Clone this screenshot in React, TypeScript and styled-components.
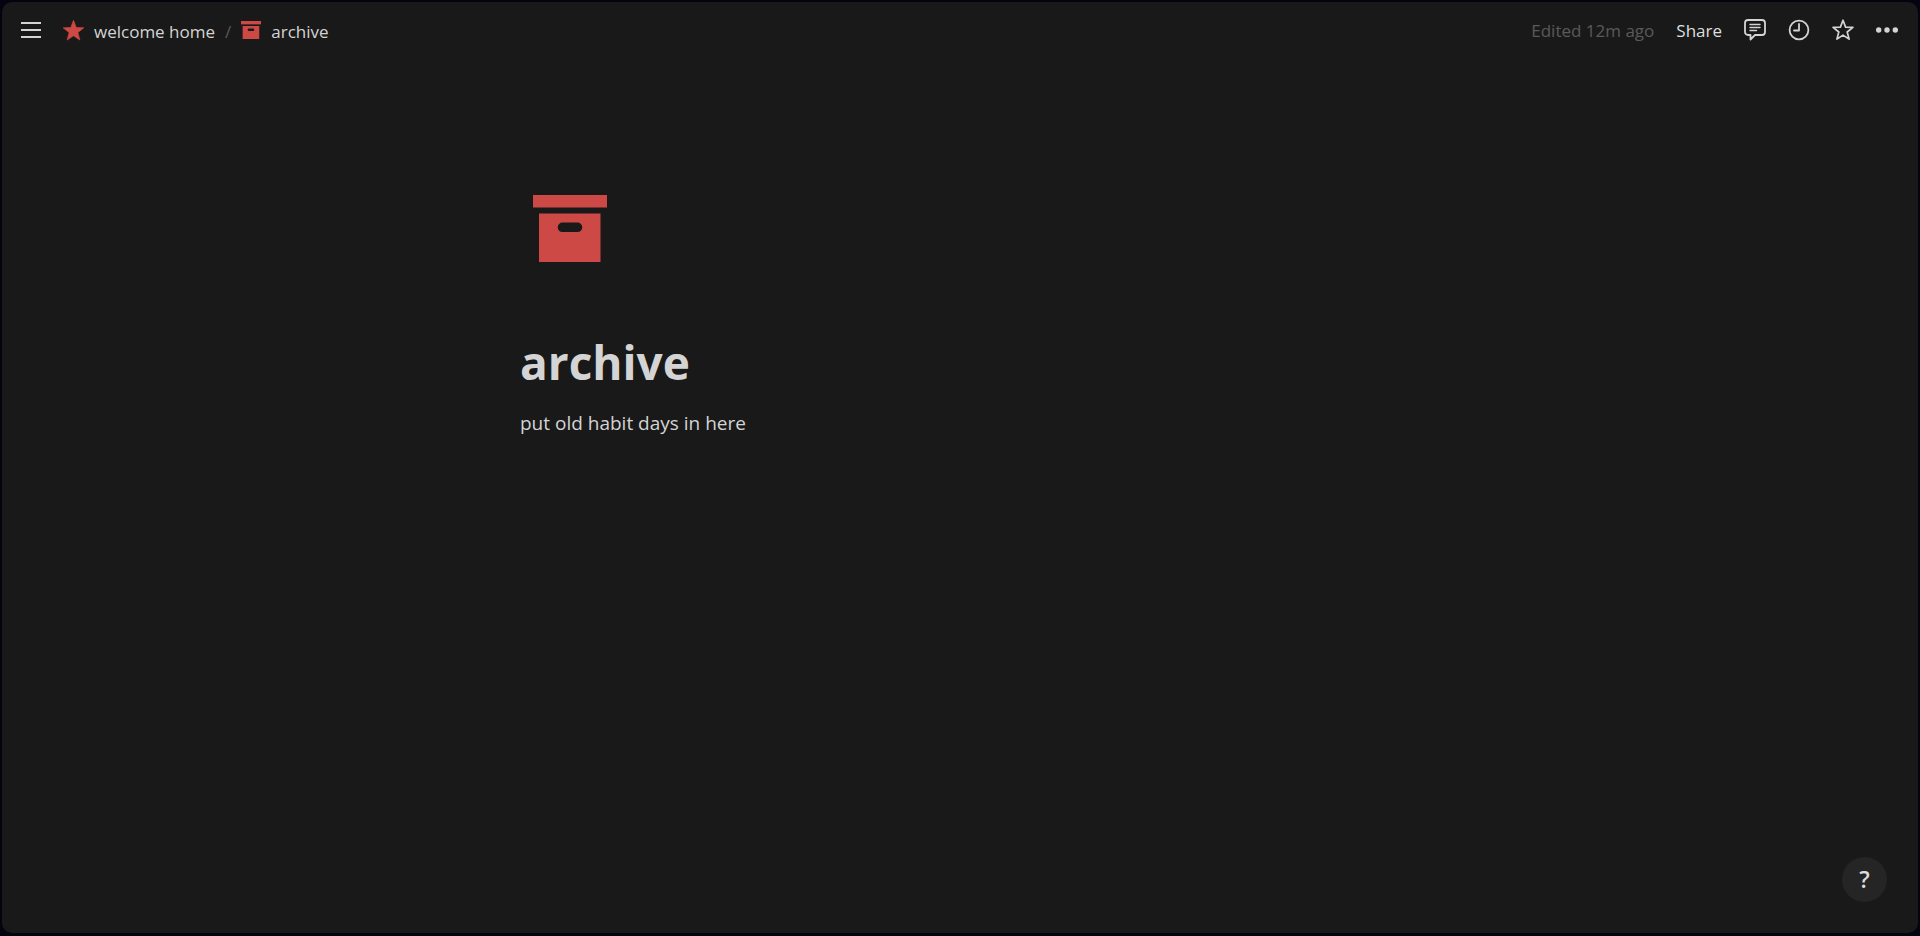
import React from "react";
import styled, { createGlobalStyle } from "styled-components";

const GlobalStyle = createGlobalStyle`
  * { box-sizing: border-box; }
  body {
    margin: 0;
    background: #03040f;
    color: #d4d4d4;
    font-family: "Segoe UI", "Open Sans", "Noto Sans", sans-serif;
  }
`;

const Window = styled.div`
  display: flex;
  flex-direction: column;
  min-height: 100vh;
  padding: 2px 2px 3px;
  background: #03040f;
`;

const Surface = styled.div`
  display: flex;
  flex-direction: column;
  flex: 1;
  border-radius: 10px;
  background: #191919;
`;

const TopBar = styled.header`
  display: flex;
  align-items: center;
  justify-content: space-between;
  height: 56px;
  padding: 0 20px 0 18px;
`;

const Group = styled.div<{ $gap: number }>`
  display: flex;
  align-items: center;
  gap: ${(p) => p.$gap}px;
`;

const IconButton = styled.button`
  display: flex;
  padding: 0;
  border: 0;
  background: none;
  color: #d4d4d4;
  cursor: pointer;
`;

const TextButton = styled.button`
  padding: 2px 0 0;
  border: 0;
  background: none;
  color: #dedede;
  font: inherit;
  font-size: 17px;
  line-height: 24px;
  cursor: pointer;
`;

const Crumb = styled.a`
  display: flex;
  align-items: center;
  gap: 10px;
  color: inherit;
  font-size: 17px;
  line-height: 24px;
  text-decoration: none;
`;

const Label = styled.span`
  padding-top: 3px;
`;

const Separator = styled.span`
  padding-top: 3px;
  color: #5a5a5a;
  font-size: 17px;
  line-height: 24px;
`;

const Edited = styled.span`
  padding-top: 2px;
  color: #5a5a5a;
  font-size: 17px;
  line-height: 24px;
`;

const Page = styled.main`
  flex: 1;
  width: 100%;
  max-width: 880px;
  margin: 0 auto;
  padding-top: 120px;
`;

const PageIcon = styled.div`
  display: flex;
  width: 100px;
  height: 100px;
  align-items: center;
  justify-content: center;
`;

const Title = styled.h1`
  margin: 54px 0 0;
  font-size: 46px;
  line-height: 60px;
  font-weight: 700;
`;

const Body = styled.p`
  margin: 16px 0 0;
  font-size: 19px;
  line-height: 30px;
`;

const Footer = styled.footer`
  display: flex;
  justify-content: flex-end;
  padding: 0 31px 31px;
`;

const HelpButton = styled.button`
  width: 45px;
  height: 45px;
  padding: 0;
  border: 0;
  border-radius: 50%;
  background: #252525;
  color: #dcdcdc;
  font: inherit;
  font-size: 23px;
  font-weight: 600;
  line-height: 45px;
  cursor: pointer;
`;

const ArchiveIcon = ({ width }: { width: number }) => (
  <svg width={width} viewBox="0 0 74 67" fill="#cd4945" aria-hidden="true">
    <path d="M0 0H74V12.5H0Z" />
    <path
      fillRule="evenodd"
      d="M6 18.5H67.5V67H6ZM29.5 27.5a4.8 4.8 0 0 0 0 9.6H44.5a4.8 4.8 0 0 0 0-9.6Z"
    />
  </svg>
);

const starPath =
  "M11 1.2 13.6 8.1 20.9 8.4 15.2 13 17.1 20.1 11 16.1 4.9 20.1 6.8 13 1.1 8.4 8.4 8.1Z";

export default function App() {
  return (
    <>
      <GlobalStyle />
      <Window>
        <Surface>
          <TopBar>
            <Group $gap={21}>
              <IconButton aria-label="Open sidebar">
                <svg width="22" height="20" viewBox="0 0 22 20" stroke="currentColor" strokeWidth="2">
                  <path d="M1 3H21M1 10H21M1 17H21" />
                </svg>
              </IconButton>
              <Group as="nav" $gap={10} aria-label="Breadcrumb">
                <Crumb href="#home">
                  <svg width="21" height="21" viewBox="1 1 20 20" fill="#cd4945" stroke="#cd4945" strokeWidth="0.6" strokeLinejoin="round" aria-hidden="true">
                    <path d={starPath} />
                  </svg>
                  <Label>welcome home</Label>
                </Crumb>
                <Separator>/</Separator>
                <Crumb href="#archive">
                  <ArchiveIcon width={20} />
                  <Label>archive</Label>
                </Crumb>
              </Group>
            </Group>
            <Group $gap={22}>
              <Edited>Edited 12m ago</Edited>
              <TextButton>Share</TextButton>
              <IconButton aria-label="Comments">
                <svg width="22" height="22" viewBox="0 0 22 22" fill="none" stroke="currentColor" strokeWidth="1.8" strokeLinejoin="round" strokeLinecap="round">
                  <path d="M4 1H18a3 3 0 0 1 3 3V13a3 3 0 0 1-3 3H11L6.500 20.500V16H4a3 3 0 0 1-3-3V4a3 3 0 0 1 3-3Z" />
                  <path strokeWidth="1.4" d="M6 5.500H16M6 8.500H16M6 11.500H12.500" />
                </svg>
              </IconButton>
              <IconButton aria-label="Updates">
                <svg width="22" height="22" viewBox="0 0 22 22" fill="none" stroke="currentColor" strokeWidth="1.8" strokeLinecap="round" strokeLinejoin="round">
                  <circle cx="11" cy="11" r="9.400" />
                  <path d="M11 5V11.500H6" />
                </svg>
              </IconButton>
              <IconButton aria-label="Favorite">
                <svg width="22" height="22" viewBox="0 0 22 22" fill="none" stroke="currentColor" strokeWidth="1.7" strokeLinejoin="round">
                  <path d={starPath} />
                </svg>
              </IconButton>
              <IconButton aria-label="More options">
                <svg width="22" height="22" viewBox="0 0 22 22" fill="currentColor">
                  <circle cx="2.700" cy="11" r="2.700" />
                  <circle cx="11" cy="11" r="2.700" />
                  <circle cx="19.300" cy="11" r="2.700" />
                </svg>
              </IconButton>
            </Group>
          </TopBar>
          <Page>
            <PageIcon>
              <ArchiveIcon width={74} />
            </PageIcon>
            <Title>archive</Title>
            <Body>put old habit days in here</Body>
          </Page>
          <Footer>
            <HelpButton aria-label="Help">?</HelpButton>
          </Footer>
        </Surface>
      </Window>
    </>
  );
}
